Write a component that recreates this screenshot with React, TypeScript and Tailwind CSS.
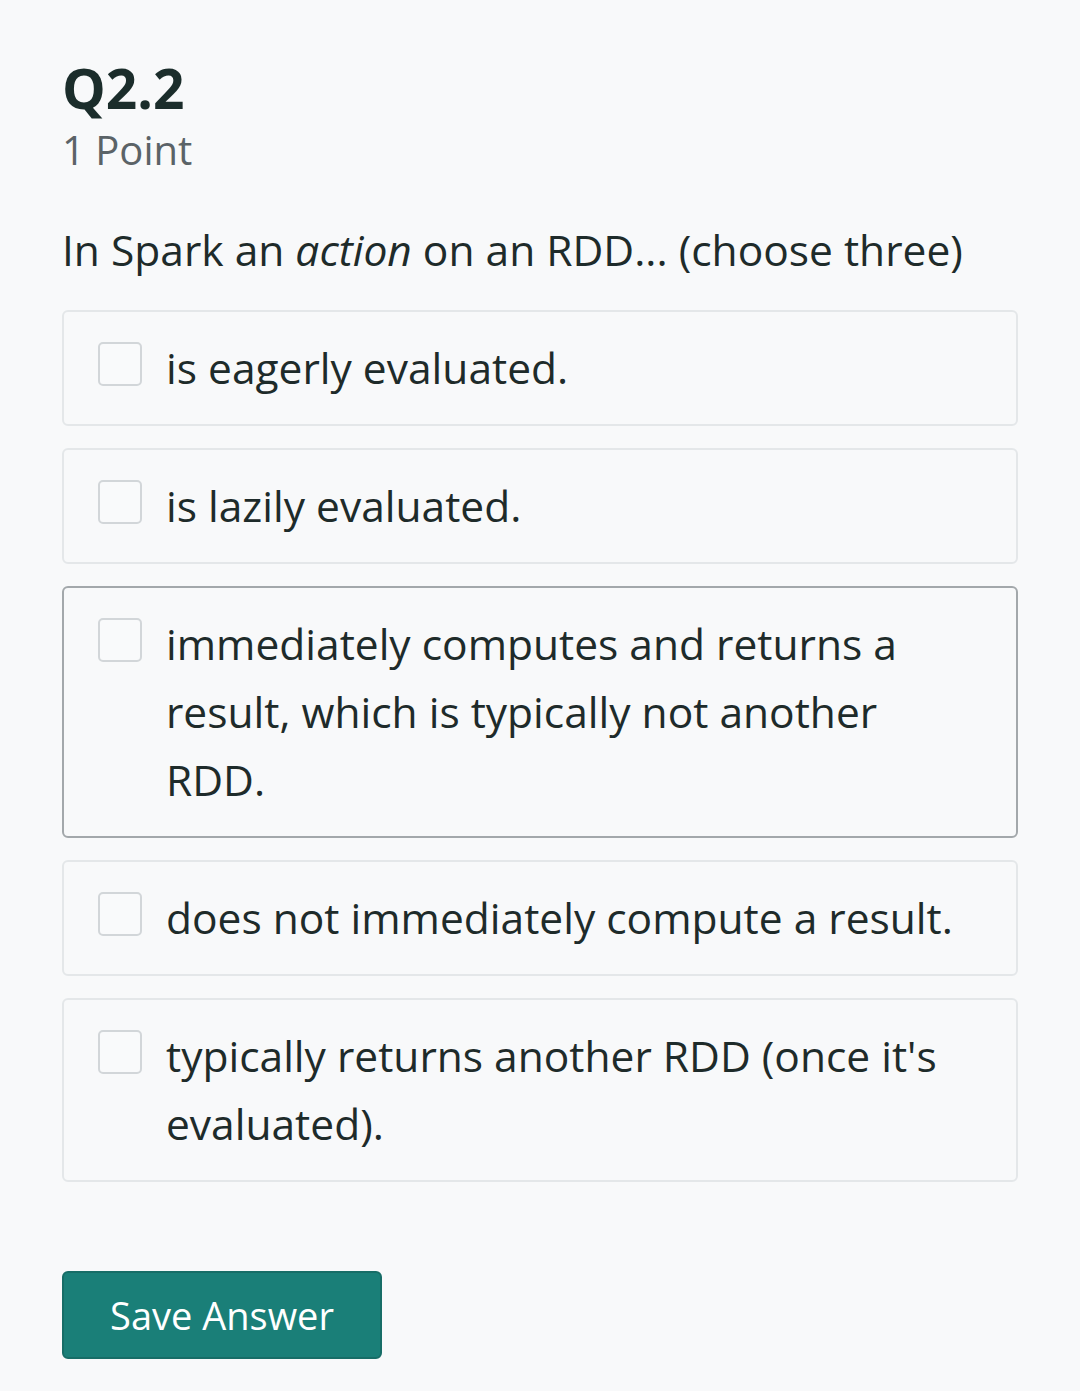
import React, { useState } from "react";

const OPTIONS = [
  "is eagerly evaluated.",
  "is lazily evaluated.",
  "immediately computes and returns a result, which is typically not another RDD.",
  "does not immediately compute a result.",
  "typically returns another RDD (once it's evaluated).",
];

export default function App() {
  const [checked, setChecked] = useState<boolean[]>(OPTIONS.map(() => false));

  const toggle = (i: number) =>
    setChecked((prev) => prev.map((v, j) => (j === i ? !v : v)));

  return (
    <div
      className="min-h-[1391px] w-full bg-[#f8f9fa] px-[62px] pt-[56px] text-[#1e2b2a]"
      style={{ fontFamily: '"Open Sans", "Liberation Sans", sans-serif' }}
    >
      {/* Header */}
      <h1 className="text-[55px] font-bold leading-[64px] text-[#1b2d2b]">Q2.2</h1>
      <p className="mt-[2px] text-[40px] leading-[56px] text-[#5b6367]">1 Point</p>

      {/* Question */}
      <p className="mt-[38px] text-[42.5px] leading-[68px]">
        In Spark an <em>action</em> on an RDD... (choose three)
      </p>

      {/* Options */}
      <div className="mt-[26px] flex w-[956px] flex-col gap-[22px]">
        {OPTIONS.map((opt, i) => (
          <label
            key={opt}
            className={
              "flex cursor-pointer items-start gap-[24px] rounded-[6px] border-2 bg-[#f8f9fa] py-[22px] pl-[34px] pr-[56px] " +
              (i === 2 ? "border-[#a3a8ab]" : "border-[#e4e7e9]")
            }
          >
            <input
              type="checkbox"
              checked={checked[i]}
              onChange={() => toggle(i)}
              className="sr-only"
            />
            <span className="mt-[8px] h-[44px] w-[44px] shrink-0 rounded-[5px] border-2 border-[#d2d6d9] bg-[#f9fafb]" />
            <span className="text-[42.5px] leading-[68px]">{opt}</span>
          </label>
        ))}
      </div>

      {/* Save */}
      <button className="mt-[89px] h-[88px] w-[320px] rounded-[6px] border-2 border-[#176d67] bg-[#1a7f78] text-[38px] text-white">
        Save Answer
      </button>
    </div>
  );
}
